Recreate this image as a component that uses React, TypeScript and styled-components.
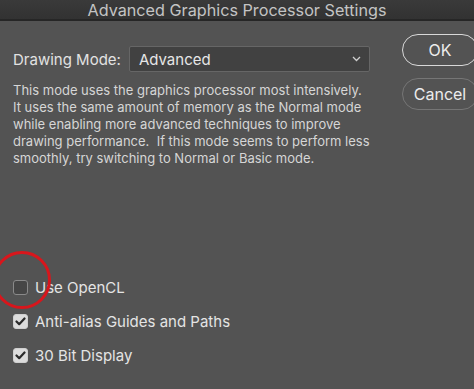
import React from "react";
import styled, { createGlobalStyle } from "styled-components";

const Global = createGlobalStyle`
  html, body { margin: 0; padding: 0; background: #535353; }
  body { font-family: Inter, "Liberation Sans", sans-serif; -webkit-font-smoothing: antialiased; }
  * { box-sizing: border-box; }
`;

const Dialog = styled.div`
  width: 474px;
  height: 389px;
  background: #535353;
  display: flex;
  flex-direction: column;
  position: relative;
  overflow: hidden;
`;

const TitleBar = styled.div`
  height: 21px;
  flex: none;
  background: linear-gradient(#3a3a3a, #323232);
  border-bottom: 2px solid #262626;
  display: flex;
  align-items: center;
  justify-content: center;
  color: #c4c4c4;
  font-size: 16.2px;
`;

const Body = styled.div`
  flex: 1;
  display: flex;
  min-height: 0;
`;

const Main = styled.div`
  flex: 1;
  display: flex;
  flex-direction: column;
  padding: 25px 0 25px 13px;
`;

const Side = styled.div`
  width: 76px;
  flex: none;
  display: flex;
  flex-direction: column;
  gap: 12px;
  padding-top: 13px;
  margin-right: -4px;
`;

const FormRow = styled.div`
  display: flex;
  align-items: center;
  gap: 8px;
`;

const Label = styled.span`
  color: #e2e2e2;
  font-size: 15px;
`;

const Select = styled.div`
  width: 241px;
  height: 26px;
  background: #414141;
  border: 1px solid #666;
  border-radius: 2px;
  display: flex;
  align-items: center;
  justify-content: space-between;
  padding: 0 8px 0 9px;
  color: #e6e6e6;
  font-size: 15px;
`;

const Description = styled.p`
  margin: 10px 0 0;
  color: #d6d6d6;
  font-size: 13px;
  line-height: 17px;
  white-space: nowrap;
`;

const Spacer = styled.div`
  flex: 1;
`;

const Checks = styled.div`
  display: flex;
  flex-direction: column;
  gap: 16px;
`;

const CheckRow = styled.label`
  display: flex;
  align-items: center;
  gap: 7px;
  color: #e4e4e4;
  font-size: 15px;
  height: 18px;
`;

const Box = styled.span<{ $checked: boolean }>`
  width: 15px;
  height: 15px;
  border-radius: 3px;
  display: flex;
  align-items: center;
  justify-content: center;
  background: ${(p) => (p.$checked ? "#dcdcdc" : "#464646")};
  border: 1px solid ${(p) => (p.$checked ? "#cfcfcf" : "#8a8a8a")};
`;

const Button = styled.div<{ $primary?: boolean }>`
  height: 32px;
  border-radius: 16px;
  border: ${(p) => (p.$primary ? "1.5px solid #d8d8d8" : "1px solid #767676")};
  display: flex;
  align-items: center;
  justify-content: center;
  color: #ececec;
  font-size: 16px;
`;

const Annotation = styled.div`
  position: absolute;
  left: -7px;
  top: 251px;
  width: 58px;
  height: 58px;
  border-radius: 50%;
  border: 3px solid #d8161c;
  pointer-events: none;
`;

const Chevron = () => (
  <svg width="9" height="6" viewBox="0 0 9 6">
    <path d="M1 1 L4.5 4.5 L8 1" fill="none" stroke="#cfcfcf" strokeWidth="1.3" />
  </svg>
);

const Tick = () => (
  <svg width="11" height="9" viewBox="0 0 11 9">
    <path d="M1.5 4.5 L4.2 7.2 L9.5 1.5" fill="none" stroke="#2a2a2a" strokeWidth="2.2" strokeLinecap="round" strokeLinejoin="round" />
  </svg>
);

const Check = ({ checked, label }: { checked: boolean; label: string }) => (
  <CheckRow>
    <Box $checked={checked}>{checked && <Tick />}</Box>
    {label}
  </CheckRow>
);

const lines = [
  "This mode uses the graphics processor most intensively.",
  "It uses the same amount of memory as the Normal mode",
  "while enabling more advanced techniques to improve",
  "drawing performance.\u00a0 If this mode seems to perform less",
  "smoothly, try switching to Normal or Basic mode.",
];

export default function App() {
  return (
    <Dialog>
      <Global />
      <TitleBar>Advanced Graphics Processor Settings</TitleBar>
      <Body>
        <Main>
          <FormRow>
            <Label>Drawing Mode:</Label>
            <Select>
              Advanced
              <Chevron />
            </Select>
          </FormRow>
          <Description>
            {lines.map((l, i) => (
              <React.Fragment key={i}>
                {l}
                {i < lines.length - 1 && <br />}
              </React.Fragment>
            ))}
          </Description>
          <Spacer />
          <Checks>
            <Check checked={false} label="Use OpenCL" />
            <Check checked={true} label="Anti-alias Guides and Paths" />
            <Check checked={true} label="30 Bit Display" />
          </Checks>
        </Main>
        <Side>
          <Button $primary>OK</Button>
          <Button>Cancel</Button>
        </Side>
      </Body>
      <Annotation />
    </Dialog>
  );
}
